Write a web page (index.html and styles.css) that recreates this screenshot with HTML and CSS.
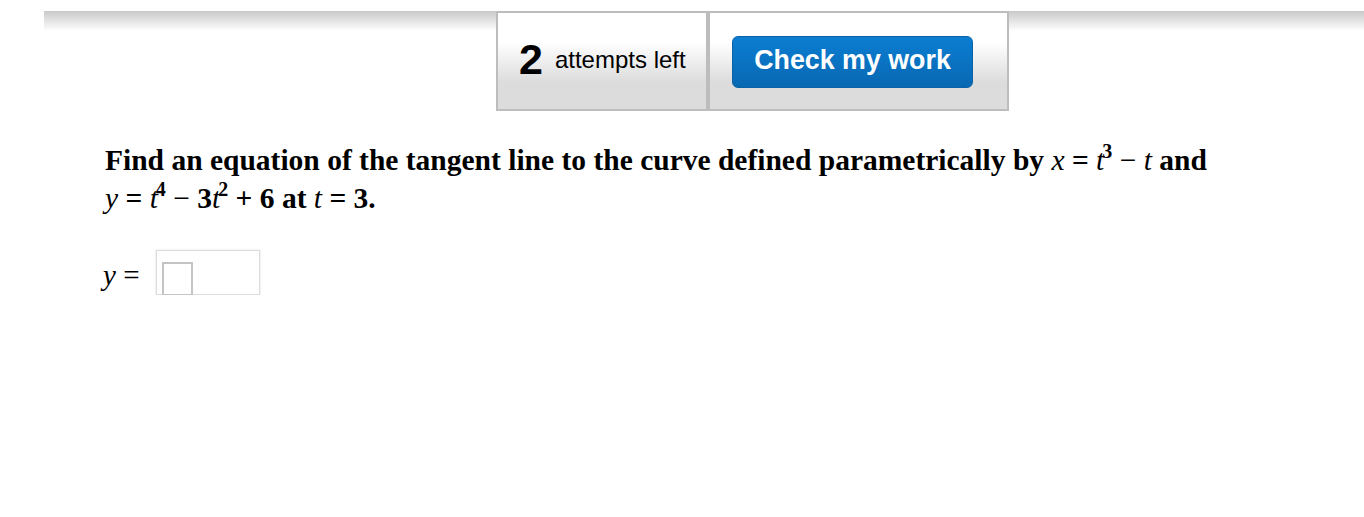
FILE: index.html
```html
<!DOCTYPE html>
<html>
<head>
<meta charset="utf-8">
<link rel="stylesheet" href="styles.css">
</head>
<body>
<div class="toolbar">
  <div class="cell attempts">
    <span class="count">2</span>
    <span class="label">attempts left</span>
  </div>
  <div class="cell check">
    <button class="btn">Check my work</button>
  </div>
</div>
<div class="question">
  <p class="prompt">Find an equation of the tangent line to the curve defined parametrically by <span class="v">x</span> = <span class="v">t</span><sup>3</sup> <span class="op">−</span> <span class="v">t</span> and<br><span class="v">y</span> = <span class="v">t</span><sup>4</sup> <span class="op">−</span> 3<span class="v">t</span><sup>2</sup> + 6 at <span class="v">t</span> = 3.</p>
  <div class="answer">
    <span class="lhs"><span class="v">y</span> =</span>
    <span class="field"><span class="slot"></span></span>
  </div>
</div>
</body>
</html>
```
FILE: styles.css
```css
html, body {
  margin: 0;
  padding: 0;
  background: #fff;
}
body {
  font-family: "Liberation Sans", Arial, sans-serif;
  color: #000;
}
.toolbar {
  margin: 11px 0 0 44px;
  height: 100px;
  display: flex;
  padding-left: 452px;
  background: linear-gradient(#c9c9c9, #ffffff) top left / 100% 20px no-repeat;
}
.cell {
  box-sizing: border-box;
  height: 100px;
  border: 2px solid #bdbdbd;
  background: linear-gradient(#ffffff 30%, #dcdcdc 72%);
  display: flex;
  align-items: flex-start;
}
.attempts {
  width: 212px;
  padding: 24px 0 0 21px;
}
.count {
  font-weight: bold;
  font-size: 43px;
  line-height: 44px;
}
.label {
  font-size: 24px;
  line-height: 24px;
  margin: 11px 0 0 12px;
}
.check {
  width: 301px;
  border-left: 0;
  padding: 23px 0 0 24px;
  box-shadow: inset 2px 0 0 #bdbdbd, -2px 0 0 #bdbdbd;
}
.btn {
  width: 241px;
  height: 52px;
  border: 1px solid #0a62a6;
  border-radius: 6px;
  background: linear-gradient(#0b7dd2, #0868b2);
  color: #fff;
  font-family: "Liberation Sans", Arial, sans-serif;
  font-weight: bold;
  font-size: 26.8px;
  padding: 0 0 4px 0;
  cursor: pointer;
}
.question {
  padding: 30px 0 0 105px;
  font-family: "Liberation Serif", "Times New Roman", serif;
}
.prompt {
  margin: 0;
  font-weight: bold;
  font-size: 29.5px;
  line-height: 38px;
}
.v {
  font-style: italic;
  font-weight: normal;
}
.op {
  font-weight: normal;
}
sup {
  font-size: 20px;
  line-height: 0;
  vertical-align: 0;
  position: relative;
  top: -12px;
  margin-left: -2px;
}
.answer {
  display: flex;
  align-items: flex-start;
  margin-top: 33px;
}
.lhs {
  font-size: 29px;
  line-height: 30px;
  margin-top: 10px;
  width: 53px;
  margin-left: -2px;
}
.field {
  box-sizing: border-box;
  width: 104px;
  height: 45px;
  border: 1px solid #dcdcdc;
  box-shadow: 0 0 2px #e0e0e0;
  position: relative;
}
.slot {
  position: absolute;
  left: 5px;
  top: 11px;
  width: 31px;
  height: 34px;
  box-sizing: border-box;
  border: 2px solid #c4c4c4;
  background: #fff;
}
```
